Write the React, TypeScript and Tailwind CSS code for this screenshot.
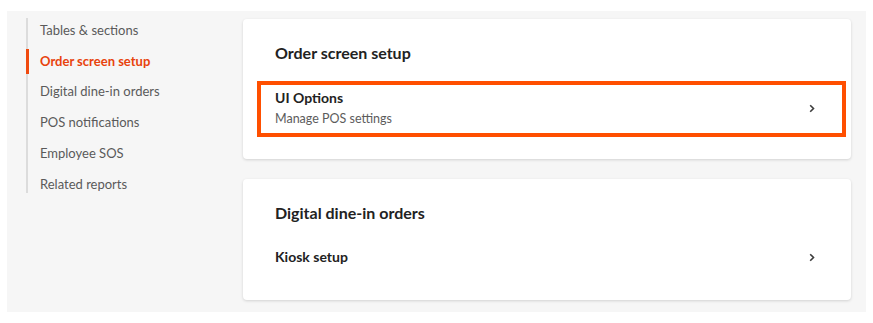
import { useState } from "react";

const NAV_ITEMS = [
  "Tables & sections",
  "Order screen setup",
  "Digital dine-in orders",
  "POS notifications",
  "Employee SOS",
  "Related reports",
];

function Chevron() {
  return (
    <svg width="6" height="9" viewBox="0 0 6 9" fill="none" className="shrink-0">
      <path d="M1.2 1.2L4.5 4.5L1.2 7.8" stroke="#3d3d3d" strokeWidth="1.6" />
    </svg>
  );
}

export default function App() {
  const [active, setActive] = useState("Order screen setup");

  return (
    <div className="w-[873px] h-[323px] bg-white pt-[11px] pl-[7px] font-['Lato',_'Liberation_Sans',_sans-serif]">
      <div className="w-[859px] h-[301px] bg-[#f6f6f6] flex gap-[19px] pl-[19px] pr-[15px] pt-[7px]">
        {/* sidebar */}
        <nav className="w-[198px] shrink-0">
          <ul className="relative flex flex-col gap-[5.8px]">
            <span className="absolute left-0 top-0 h-[175px] w-[2px] bg-[#dcdcdc]" />
            {NAV_ITEMS.map((item) => {
              const isActive = item === active;
              return (
                <li
                  key={item}
                  onClick={() => setActive(item)}
                  className={`relative h-[25px] flex items-center pl-[14px] text-[13px] cursor-pointer ${
                    isActive ? "text-[#e8430d] font-bold" : "text-[#5a5a5a]"
                  }`}
                >
                  {isActive && <span className="absolute left-0 top-0 h-full w-[3px] bg-[#f04a0f]" />}
                  {item}
                </li>
              );
            })}
          </ul>
        </nav>

        {/* content */}
        <div className="flex-1 flex flex-col gap-[20px] pt-[1px]">
          <section className="bg-white rounded-[4px] shadow-[0_1px_3px_rgba(0,0,0,0.15)] h-[140px] px-8 pt-[22px]">
            <h2 className="text-[16px] leading-[24px] font-bold text-[#222]">Order screen setup</h2>
            <div className="relative mt-[22px] flex items-center justify-between pr-[4px]">
              <span className="absolute -left-[18px] -right-[27px] -top-[6px] -bottom-[8px] border-4 border-[#ff4f00] pointer-events-none" />
              <div className="flex flex-col">
                <span className="text-[14px] leading-[21px] font-bold text-[#222]">UI Options</span>
                <span className="text-[12.5px] leading-[21px] text-[#5c5c5c]">Manage POS settings</span>
              </div>
              <Chevron />
            </div>
          </section>

          <section className="bg-white rounded-[4px] shadow-[0_1px_3px_rgba(0,0,0,0.15)] h-[121px] px-8 pt-[22px]">
            <h2 className="text-[16px] leading-[24px] font-bold text-[#222]">Digital dine-in orders</h2>
            <div className="mt-[22px] flex items-center justify-between pr-[4px]">
              <span className="text-[14px] leading-[20px] font-bold text-[#222]">Kiosk setup</span>
              <Chevron />
            </div>
          </section>
        </div>
      </div>
    </div>
  );
}
